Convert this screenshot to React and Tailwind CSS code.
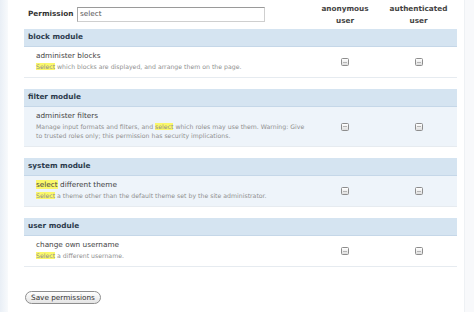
const ROWS = [
  {
    module: 'block module',
    title: [{ t: 'administer blocks' }],
    desc: [{ t: 'Select', hl: true }, { t: ' which blocks are displayed, and arrange them on the page.' }],
    shaded: false,
  },
  {
    module: 'filter module',
    title: [{ t: 'administer filters' }],
    desc: [
      { t: 'Manage input formats and filters, and ' },
      { t: 'select', hl: true },
      { t: ' which roles may use them. Warning: Give to trusted roles only; this permission has security implications.' },
    ],
    shaded: true,
  },
  {
    module: 'system module',
    title: [{ t: 'select', hl: true }, { t: ' different theme' }],
    desc: [{ t: 'Select', hl: true }, { t: ' a theme other than the default theme set by the site administrator.' }],
    shaded: true,
  },
  {
    module: 'user module',
    title: [{ t: 'change own username' }],
    desc: [{ t: 'Select', hl: true }, { t: ' a different username.' }],
    shaded: false,
  },
];

function Parts({ parts }) {
  return parts.map((p, i) =>
    p.hl ? (
      <span key={i} className="bg-[#fbf86a]">{p.t}</span>
    ) : (
      <span key={i}>{p.t}</span>
    )
  );
}

function Checkbox() {
  return (
    <div className="w-[8px] h-[8px] rounded-[1.5px] border border-[#8d8d8d] bg-gradient-to-b from-white to-[#dedede] flex items-center justify-center">
      <div className="w-[4px] h-px bg-[#b5b5b5]" />
    </div>
  );
}

export default function App() {
  return (
    <div
      className="flex w-[474px] h-[312px] bg-white overflow-hidden text-[#444]"
      style={{ fontFamily: '"DejaVu Sans", Verdana, sans-serif' }}
    >
      {/* left strip */}
      <div className="w-[8px] flex-shrink-0 bg-gradient-to-r from-[#e9eff6] to-[#f8fafc]" />

      <div className="w-[433px] ml-[16px] flex-shrink-0">
        {/* header row */}
        <div className="grid grid-cols-[286px_70px_77px] h-[29px] items-center">
          <div className="flex items-center pl-[4px]">
            <span className="text-[7.3px] font-bold text-[#333] w-[49px]">Permission</span>
            <div className="w-[188px] h-[15px] border border-[#cfcfcf] border-t-[#9a9a9a] border-l-[#a8a8a8] bg-white flex items-center pl-[2px] text-[7.3px] text-[#555]">
              select
            </div>
          </div>
          <div className="text-center text-[7.3px] font-bold text-[#444] leading-[12px] pt-[1px]">anonymous<br />user</div>
          <div className="text-center text-[7.3px] font-bold text-[#444] leading-[12px] pt-[1px]">authenticated<br />user</div>
        </div>

        {ROWS.map((row) => (
          <div key={row.module} className="mb-[11px]">
            <div className="h-[18px] bg-[#d5e4f1] flex items-center pl-[4px] text-[7.3px] font-bold text-[#2c3b4d] border-b border-[#c5d7e8]">
              {row.module}
            </div>
            <div
              className={`grid grid-cols-[286px_70px_77px] items-center border-b border-[#e6ebf0] ${
                row.shaded ? 'bg-[#eef4fa]' : 'bg-white'
              }`}
            >
              <div className="pl-[12px] pr-[4px] pt-[3px] pb-[6px]">
                <div className="text-[7.3px] text-[#444] leading-[12px]">
                  <Parts parts={row.title} />
                </div>
                <div className="text-[6.2px] text-[#8f8f8f] leading-[9px]">
                  <Parts parts={row.desc} />
                </div>
              </div>
              <div className="flex justify-center">
                <Checkbox />
              </div>
              <div className="flex justify-center">
                <Checkbox />
              </div>
            </div>
          </div>
        ))}

        <div className="mt-[16px] pl-[1px]">
          <button className="h-[13px] px-[5px] rounded-full border border-[#8e8e8e] bg-gradient-to-b from-white to-[#e4e4e4] text-[7.3px] text-[#333] leading-none">
            Save permissions
          </button>
        </div>
      </div>

      <div className="flex-1" />
      {/* right strip */}
      <div className="w-[10px] flex-shrink-0 border-l border-[#eef1f4] bg-[#f8f9fb]" />
    </div>
  );
}
